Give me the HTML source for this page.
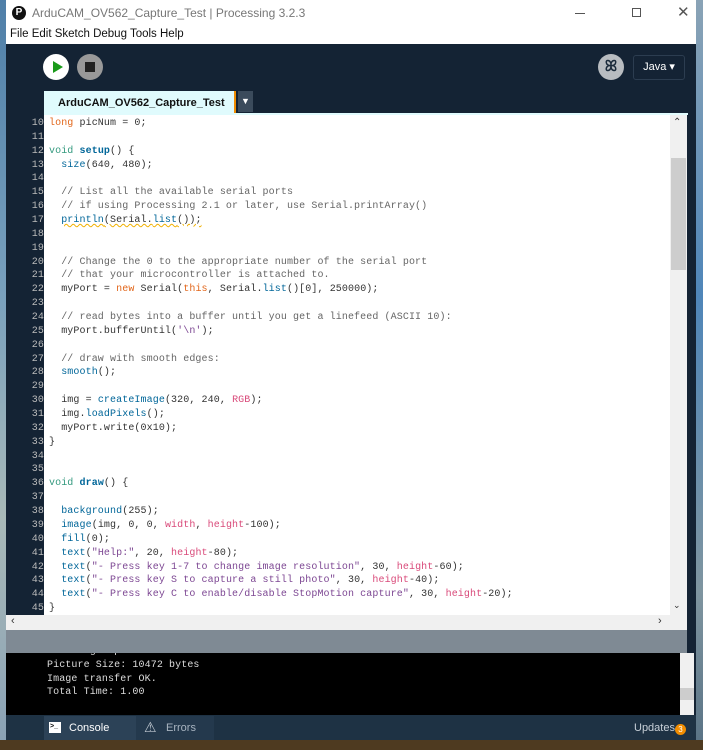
<!DOCTYPE html>
<html><head><meta charset="utf-8"><style>
*{margin:0;padding:0;box-sizing:border-box}
body{width:703px;height:750px;overflow:hidden;background:#5b86a8;position:relative;font-family:"Liberation Sans",sans-serif}
.abs{position:absolute}
#desk{left:0;top:0;width:6px;height:740px;background:linear-gradient(#4f7fa8,#7aa1bd 40%,#a9b9b8 70%,#8aa2b5)}
#deskr{left:696px;top:0;width:7px;height:740px;background:linear-gradient(#8aa3b6,#4f86b9 40%,#7f95a0 80%,#5b7486)}
#task{left:0;top:740px;width:703px;height:10px;background:#4e3a20}
#win{left:6px;top:0;width:690px;height:740px;background:#142334}
#title{left:0;top:0;width:690px;height:27px;background:#fff;font-size:12px;color:#777}
#menu{left:0;top:27px;width:690px;height:17px;background:#fff;font-size:11.5px;color:#111}
.code{font-family:"Liberation Mono",monospace;font-size:10px;letter-spacing:0.1px;line-height:13.86px;white-space:pre}
.k{color:#e2661a}.t{color:#33997e}.f{color:#006699;font-weight:bold}.b{color:#006699}.c{color:#666}.p{color:#d94a7a}.s{color:#7d4793}
</style></head><body>
<div class="abs" id="desk"></div><div class="abs" id="deskr"></div><div class="abs" id="task"></div>
<div class="abs" id="win">
 <div class="abs" id="title">
  <div class="abs" style="left:6px;top:6px;width:14px;height:14px;border-radius:7px;background:#111;color:#fff;font-size:10px;font-weight:bold;text-align:center;line-height:14px">P</div>
  <div class="abs" style="left:26px;top:6px">ArduCAM_OV562_Capture_Test | Processing 3.2.3</div>
  <div class="abs" style="left:569px;top:13px;width:10px;height:1px;background:#555"></div>
  <div class="abs" style="left:626px;top:8px;width:9px;height:9px;border:1px solid #555"></div>
  <div class="abs" style="left:671px;top:3px;font-size:15px;color:#555">✕</div>
 </div>
 <div class="abs" id="menu"><div class="abs" style="left:4px;top:1px;word-spacing:0px">File Edit Sketch Debug Tools Help</div></div>
 <div class="abs" style="left:37px;top:54px;width:26px;height:26px;border-radius:13px;background:#fff"></div>
 <div class="abs" style="left:47px;top:61px;width:0;height:0;border-left:10px solid #1a9a1a;border-top:6px solid transparent;border-bottom:6px solid transparent"></div>
 <div class="abs" style="left:71px;top:54px;width:26px;height:26px;border-radius:13px;background:#999"></div>
 <div class="abs" style="left:79px;top:62px;width:10px;height:10px;background:#222"></div>
 <div class="abs" style="left:592px;top:54px;width:26px;height:26px;border-radius:13px;background:#b8bcc0;color:#1a2a3a;font-size:15px;font-weight:bold;text-align:center;line-height:26px">ꕤ</div>
 <div class="abs" style="left:627px;top:55px;width:52px;height:25px;border:1px solid #2c3d50;border-radius:3px;color:#fff;font-size:11px;line-height:23px;text-align:center">Java ▾</div>
 <div class="abs" style="left:38px;top:91px;width:192px;height:24px;background:#e0fbfd;border-right:2px solid #f08c00;font-size:11px;font-weight:bold;color:#111;padding:6px 0 0 14px;white-space:nowrap;overflow:hidden">ArduCAM_OV562_Capture_Test</div>
 <div class="abs" style="left:232px;top:91px;width:15px;height:21px;background:#3b4b5c;color:#fff;font-size:9px;text-align:center;line-height:21px">▼</div>
 <div class="abs" style="left:38px;top:113px;width:644px;height:2px;background:#e0fbfd"></div>
 <!-- editor -->
 <div class="abs" style="left:38px;top:115px;width:626px;height:500px;background:#fff"></div>
 <div class="abs code" style="left:8px;top:117px;width:30px;text-align:right;color:#bbb">10
11
12
13
14
15
16
17
18
19
20
21
22
23
24
25
26
27
28
29
30
31
32
33
34
35
36
37
38
39
40
41
42
43
44
45</div>
 <div class="abs code" style="left:43px;top:117px;color:#333;width:620px;height:498px;overflow:hidden"><span class="k">long</span> picNum = 0;

<span class="t">void</span> <span class="f">setup</span>() {
  <span class="b">size</span>(640, 480);

  <span class="c">// List all the available serial ports</span>
  <span class="c">// if using Processing 2.1 or later, use Serial.printArray()</span>
  <span class="b" style="text-decoration:underline wavy #f0b000">println</span><span style="text-decoration:underline wavy #f0b000">(Serial.<span class="b">list</span>());</span>


  <span class="c">// Change the 0 to the appropriate number of the serial port</span>
  <span class="c">// that your microcontroller is attached to.</span>
  myPort = <span class="k">new</span> Serial(<span class="k">this</span>, Serial.<span class="b">list</span>()[0], 250000);

  <span class="c">// read bytes into a buffer until you get a linefeed (ASCII 10):</span>
  myPort.bufferUntil(<span class="s">'\n'</span>);

  <span class="c">// draw with smooth edges:</span>
  <span class="b">smooth</span>();

  img = <span class="b">createImage</span>(320, 240, <span class="p">RGB</span>);
  img.<span class="b">loadPixels</span>();
  myPort.write(0x10);
}


<span class="t">void</span> <span class="f">draw</span>() {

  <span class="b">background</span>(255);
  <span class="b">image</span>(img, 0, 0, <span class="p">width</span>, <span class="p">height</span>-100);
  <span class="b">fill</span>(0);
  <span class="b">text</span>(<span class="s">"Help:"</span>, 20, <span class="p">height</span>-80);
  <span class="b">text</span>(<span class="s">"- Press key 1-7 to change image resolution"</span>, 30, <span class="p">height</span>-60);
  <span class="b">text</span>(<span class="s">"- Press key S to capture a still photo"</span>, 30, <span class="p">height</span>-40);
  <span class="b">text</span>(<span class="s">"- Press key C to enable/disable StopMotion capture"</span>, 30, <span class="p">height</span>-20);
}</div>
 <div class="abs" style="left:664px;top:115px;width:17px;height:500px;background:#f0f0f0"></div>
 <div class="abs" style="left:665px;top:158px;width:15px;height:112px;background:#cdcdcd"></div>
 <div class="abs" style="left:667px;top:117px;font-size:10px;color:#333">⌃</div>
 <div class="abs" style="left:667px;top:600px;font-size:9px;color:#333">⌄</div>
 <div class="abs" style="left:0;top:615px;width:681px;height:15px;background:#f0f0f0;font-size:11px;color:#333"><span class="abs" style="left:5px;top:0">‹</span><span class="abs" style="left:652px;top:0">›</span></div>
 <div class="abs" style="left:0;top:630px;width:681px;height:23px;background:#7f8a94"></div>
 <div class="abs" style="left:681px;top:615px;width:9px;height:38px;background:#142334"></div>
 <!-- console -->
 <div class="abs code" style="left:0;top:653px;width:674px;height:62px;background:#000;color:#ddd;padding-left:41px;line-height:13.8px;font-size:10px;overflow:hidden"><div style="margin-top:-8px">Starting Capture
Picture Size: 10472 bytes
Image transfer OK.
Total Time: 1.00</div></div>
 <div class="abs" style="left:674px;top:653px;width:14px;height:62px;background:#f0f0f0"></div>
 <div class="abs" style="left:674px;top:688px;width:14px;height:12px;background:#cdcdcd"></div>
 <div class="abs" style="left:688px;top:653px;width:2px;height:62px;background:#142334"></div>
 <!-- bottom bar -->
 <div class="abs" style="left:0;top:715px;width:690px;height:25px;background:#1e3244"></div>
 <div class="abs" style="left:38px;top:716px;width:92px;height:24px;background:#2c4257;color:#fff;font-size:11px">
  <div class="abs" style="left:5px;top:6px;width:12px;height:11px;background:#fff;color:#000;font-size:7px;line-height:10px;font-weight:bold;padding-left:1px">&gt;_</div>
  <div class="abs" style="left:25px;top:6px">Console</div></div>
 <div class="abs" style="left:130px;top:716px;width:78px;height:24px;background:#24394d;color:#a8b4c0;font-size:11px">
  <div class="abs" style="left:8px;top:3px;font-size:14px;color:#c0c8d0">⚠</div>
  <div class="abs" style="left:30px;top:6px">Errors</div></div>
 <div class="abs" style="left:628px;top:722px;color:#c8d0d8;font-size:11px">Updates</div>
 <div class="abs" style="left:669px;top:724px;width:11px;height:11px;border-radius:6px;background:#f08c00;color:#fff;font-size:8px;text-align:center;line-height:11px">3</div>
</div>
</body></html>
